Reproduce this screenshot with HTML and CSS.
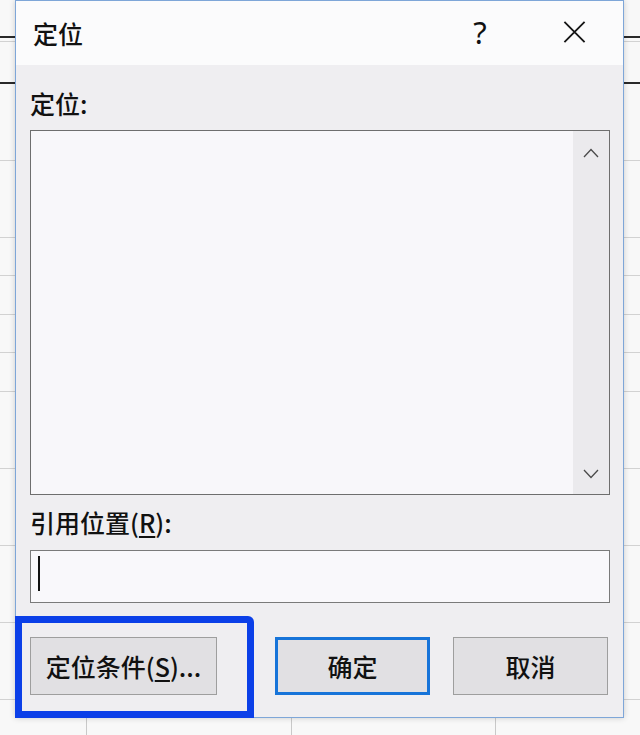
FILE: index.html
```html
<!DOCTYPE html>
<html lang="zh-CN">
<head>
    <meta charset="UTF-8">
    <meta name="viewport" content="width=device-width, initial-scale=1.0">
    <title>定位</title>
    <link rel="stylesheet" href="styles.css">
</head>
<body>
    <div class="sheet">
        <div class="dialog">
            <div class="titlebar">
                <span class="title">定位</span>
                <span class="help">?</span>
                <span class="close">
                    <svg width="24" height="24" viewBox="0 0 24 24">
                        <path d="M1 1 L23 23 M23 1 L1 23" stroke="#151515" stroke-width="2" fill="none"/>
                    </svg>
                </span>
            </div>
            <div class="content">
                <div class="label">定位:</div>
                <div class="listbox">
                    <div class="list"></div>
                    <div class="scroll">
                        <svg width="16" height="10" viewBox="0 0 16 10">
                            <path d="M1 9 L8 1.5 L15 9" stroke="#4a4a4a" stroke-width="1.3" fill="none"/>
                        </svg>
                        <svg width="16" height="10" viewBox="0 0 16 10">
                            <path d="M1 1 L8 8.5 L15 1" stroke="#4a4a4a" stroke-width="1.3" fill="none"/>
                        </svg>
                    </div>
                </div>
                <div class="label ref">引用位置(<u>R</u>):</div>
                <div class="input"><span class="caret"></span></div>
                <div class="buttons">
                    <button class="btn special">定位条件(<u>S</u>)...</button>
                    <button class="btn ok">确定</button>
                    <button class="btn cancel">取消</button>
                </div>
            </div>
        </div>
        <div class="highlight"></div>
    </div>
</body>
</html>
```

FILE: styles.css
```css
body{
    margin: 0;
    padding: 0;
    font-family: "Noto Sans CJK SC", "Noto Sans", sans-serif;
    color: #111;
}
.sheet{
    position: relative;
    width: 640px;
    height: 735px;
    overflow: hidden;
    background-color: #f8f8f8;
    background-image:
        linear-gradient(#2a2a2a, #2a2a2a),
        linear-gradient(#2a2a2a, #2a2a2a),
        repeating-linear-gradient(to bottom, transparent 0, transparent 37.5px, #d2d2d2 37.5px, #d2d2d2 38.5px),
        repeating-linear-gradient(to right, transparent 0, transparent 203.5px, #c9c9c9 203.5px, #c9c9c9 204.5px);
    background-size: 100% 2px, 100% 2px, 100% 100%, 100% 100%;
    background-position: 0 36px, 0 82px, 0 84px, -117px 0;
    background-repeat: no-repeat, no-repeat, repeat, repeat;
}
.dialog{
    position: absolute;
    left: 15px;
    top: 0;
    width: 607px;
    height: 716px;
    border: 1px solid #7ea6d8;
    background: #efeef1;
    box-shadow: 0 0 6px rgba(0, 0, 0, 0.18);
    display: flex;
    flex-direction: column;
}
.titlebar{
    height: 64px;
    background: #fbfbfc;
    display: flex;
    align-items: center;
    padding-left: 17px;
    padding-right: 19px;
}
.title{
    flex: 1;
    font-size: 25px;
    font-weight: 500;
}
.help{
    width: 40px;
    margin-right: 44px;
    text-align: center;
    font-family: "Noto Sans", sans-serif;
    font-size: 31px;
    margin-top: -2px;
}
.close{
    width: 60px;
    display: flex;
    justify-content: center;
    margin-top: -2px;
}
.close svg{
    width: 23px;
    height: 22px;
}
.content{
    padding: 0 13px 0 14px;
}
.label{
    font-size: 25px;
    font-weight: 500;
    line-height: 30px;
    margin-top: 23px;
}
.label.ref{
    margin-top: 12px;
}
.label u{
    text-underline-offset: 3px;
}
.listbox{
    margin-top: 12px;
    height: 363px;
    border: 1px solid #6e6e6e;
    display: flex;
}
.list{
    flex: 1;
    background: #f8f7fa;
}
.scroll{
    width: 36px;
    background: #ebeaed;
    display: flex;
    flex-direction: column;
    justify-content: space-between;
    align-items: center;
    padding: 17px 0 15px;
}
.input{
    margin-top: 13px;
    height: 46px;
    border: 1px solid #7a7a7a;
    background: #f9f8fb;
    padding: 5px 0 0 7px;
}
.caret{
    display: block;
    width: 2px;
    height: 35px;
    background: #111;
}
.buttons{
    display: flex;
    margin-top: 34px;
}
.btn{
    height: 58px;
    background: #e1e0e3;
    border: 1px solid #9e9e9e;
    font-family: "Noto Sans CJK SC", "Noto Sans", sans-serif;
    font-size: 25px;
    font-weight: 500;
    color: #111;
    padding: 0;
}
.btn u{
    text-underline-offset: 3px;
}
.special{
    width: 187px;
}
.ok{
    width: 155px;
    margin-left: 58px;
    border: 3px solid #1774d9;
}
.cancel{
    width: 155px;
    margin-left: 23px;
}
.highlight{
    position: absolute;
    left: 15px;
    top: 616px;
    width: 225px;
    height: 88px;
    border: 7px solid #0b3fe8;
    border-top-right-radius: 6px;
}
```
